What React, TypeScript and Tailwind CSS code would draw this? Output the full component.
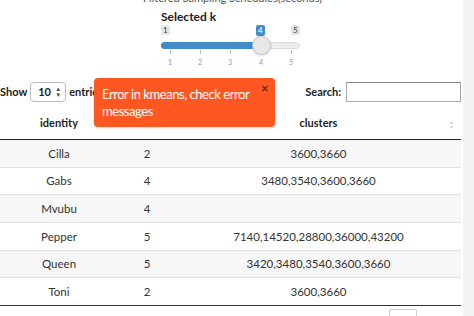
import { Fragment } from 'react';

const rows = [
  ['Cilla', '2', '3600,3660'],
  ['Gabs', '4', '3480,3540,3600,3660'],
  ['Mvubu', '4', ''],
  ['Pepper', '5', '7140,14520,28800,36000,43200'],
  ['Queen', '5', '3420,3480,3540,3600,3660'],
  ['Toni', '2', '3600,3660'],
];

function Slider() {
  const ticks = [
    { n: '1', x: 9 },
    { n: '2', x: 39 },
    { n: '3', x: 69 },
    { n: '4', x: 100 },
    { n: '5', x: 130 },
  ];
  return (
    <div className="relative w-[139px] h-[46px] mt-[2px]">
      <span className="absolute left-0 top-0 h-[10px] px-[2px] bg-[#e6e6e6] text-[8px] leading-[10px] text-[#333] rounded-[2px]">1</span>
      <span className="absolute left-[95px] top-0 h-[11px] px-[2px] bg-[#428bca] text-[8px] leading-[11px] text-white rounded-[2px]">4</span>
      <span className="absolute left-[130px] top-0 h-[10px] px-[2px] bg-[#e6e6e6] text-[8px] leading-[10px] text-[#333] rounded-[2px]">5</span>
      <div className="absolute left-0 right-0 top-[17px] h-[7px] rounded-full bg-[#ededed] border border-[#dcdcdc]" />
      <div className="absolute left-0 w-[100px] top-[17px] h-[7px] rounded-l-full bg-[#428bca]" />
      {ticks.map((t) => (
        <Fragment key={t.n}>
          <div className="absolute top-[25px] w-px h-[4px] bg-[#bbb]" style={{ left: t.x }} />
          <span className="absolute top-[33px] text-[7px] leading-[8px] text-[#999] -translate-x-1/2" style={{ left: t.x }}>{t.n}</span>
        </Fragment>
      ))}
      <div className="absolute left-[91px] top-[11px] w-[19px] h-[19px] rounded-full bg-[#e8e8e8] border border-[#c4c4c4] shadow-sm" />
    </div>
  );
}

export default function App() {
  return (
    <div className="relative w-[474px] h-[316px] overflow-hidden bg-white flex font-['Lato',sans-serif] text-[#333]">
      <div className="w-[461px] shrink-0 flex flex-col">
        <div className="h-[14px] -mt-[9px] flex justify-center pl-[4px] text-[11px] leading-[14px] text-[#555]">
          Filtered Sampling Schedules(seconds)
        </div>
        <div className="pl-[161px] pt-[5px]">
          <div className="text-[12px] leading-[13px] font-bold text-[#222]">Selected k</div>
          <Slider />
        </div>

        <div className="flex items-center justify-between mt-[11px] h-[21px]">
          <div className="flex items-center gap-[3px] text-[11px] font-bold text-[#222]">
            <span>Show</span>
            <div className="w-[36px] h-[20px] border border-[#bbb] rounded-[4px] flex items-center justify-between pl-[7px] pr-[4px] text-[11px]">
              <span className="font-bold">10</span>
              <span className="flex flex-col text-[6px] leading-[6px] text-[#444]">
                <span>▲</span>
                <span>▼</span>
              </span>
            </div>
            <span>entries</span>
          </div>
          <div className="flex items-center gap-[5px] text-[11px] font-bold text-[#222]">
            <span>Search:</span>
            <div className="w-[115px] h-[20px] border border-[#aaa] border-t-[#888]" />
          </div>
        </div>

        <div className="mt-[7px] grid grid-cols-[118px_58px_1fr] text-[11.5px]">
          <div className="h-[31px] flex items-end pb-[8px] justify-center font-bold text-[11px] text-[#222] border-b border-[#222]">identity</div>
          <div className="h-[31px] flex items-end pb-[8px] justify-center font-bold text-[11px] text-[#222] border-b border-[#222]">k</div>
          <div className="h-[31px] flex items-end pb-[8px] justify-center relative font-bold text-[11px] text-[#222] border-b border-[#222]">
            clusters
            <span className="absolute right-[7px] bottom-[9px] flex flex-col text-[5px] leading-[5px] text-[#ccc]">
              <span>▲</span>
              <span>▼</span>
            </span>
          </div>
          {rows.map((r, i) => {
            const bg = i % 2 === 0 ? 'bg-[#f7f7f7]' : 'bg-white';
            const line = i === rows.length - 1 ? 'border-b border-[#333]' : 'border-b border-[#e2e2e2]';
            return (
              <Fragment key={r[0]}>
                <div className={`h-[27.7px] flex items-center justify-center ${bg} ${line}`}>{r[0]}</div>
                <div className={`h-[27.7px] flex items-center justify-center ${bg} ${line}`}>{r[1]}</div>
                <div className={`h-[27.7px] flex items-center justify-center ${bg} ${line}`}>{r[2]}</div>
              </Fragment>
            );
          })}
        </div>
        <div className="flex pl-[389px] pt-[3px]">
          <div className="w-[28px] h-[20px] border border-[#ccc] rounded-[2px]" />
        </div>
      </div>
      <div className="w-[2px] shrink-0" />
      <div className="flex-1 bg-[#f3f3f3]" />

      <div className="absolute left-[94px] top-[78px] w-[181px] h-[49px] rounded-[4px] bg-[#ff5722] text-white text-[13px] leading-[17px] tracking-[-0.45px] pl-[8px] pt-[8px] shadow-sm">
        <div>Error in kmeans, check error</div>
        <div>messages</div>
        <span className="absolute right-[7px] top-[2px] text-[13px] font-bold text-[#4a1a0a] opacity-80">×</span>
      </div>
    </div>
  );
}
